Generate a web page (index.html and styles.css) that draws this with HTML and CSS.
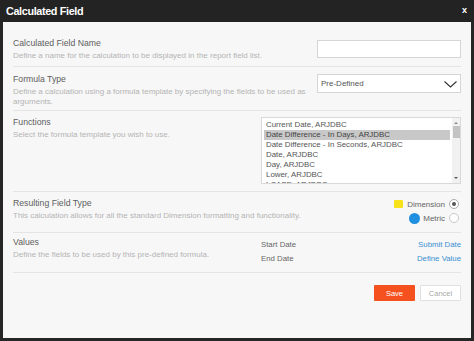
FILE: index.html
```html
<!DOCTYPE html>
<html>
<head>
<meta charset="utf-8">
<link rel="stylesheet" href="styles.css">
</head>
<body>
<div class="dialog">
  <div class="titlebar">
    <span class="title">Calculated Field</span>
    <span class="close">x</span>
  </div>
  <div class="body">
    <div class="row r1">
      <div class="info">
        <div class="label">Calculated Field Name</div>
        <div class="desc">Define a name for the calculation to be displayed in the report field list.</div>
      </div>
      <div class="input"></div>
    </div>
    <div class="row r2">
      <div class="info">
        <div class="label">Formula Type</div>
        <div class="desc">Define a calculation using a formula template by specifying the fields to be used as arguments.</div>
      </div>
      <div class="select">
        <span>Pre-Defined</span>
        <svg class="chev" width="13" height="7" viewBox="0 0 13 7"><path d="M0.5 0.5 L6.5 6 L12.5 0.5" fill="none" stroke="#333" stroke-width="1.1"/></svg>
      </div>
    </div>
    <div class="row r3">
      <div class="info">
        <div class="label">Functions</div>
        <div class="desc">Select the formula template you wish to use.</div>
      </div>
      <div class="listbox">
        <div class="items">
          <div class="item">Current Date, ARJDBC</div>
          <div class="item sel">Date Difference - In Days, ARJDBC</div>
          <div class="item">Date Difference - In Seconds, ARJDBC</div>
          <div class="item">Date, ARJDBC</div>
          <div class="item">Day, ARJDBC</div>
          <div class="item">Lower, ARJDBC</div>
          <div class="item">LCASE, ARJDBC</div>
        </div>
        <div class="scroll">
          <div class="arrow up"></div>
          <div class="thumb"></div>
          <div class="arrow down"></div>
        </div>
      </div>
    </div>
    <div class="row r4">
      <div class="info">
        <div class="label">Resulting Field Type</div>
        <div class="desc">This calculation allows for all the standard Dimension formatting and functionality.</div>
      </div>
      <div class="types">
        <div class="type"><span class="sq"></span><span>Dimension</span><span class="radio on"></span></div>
        <div class="type"><span class="dot"></span><span>Metric</span><span class="radio"></span></div>
      </div>
    </div>
    <div class="row r5">
      <div class="info">
        <div class="label">Values</div>
        <div class="desc">Define the fields to be used by this pre-defined formula.</div>
      </div>
      <div class="values">
        <div class="val"><span>Start Date</span><span class="link">Submit Date</span></div>
        <div class="val"><span>End Date</span><span class="link">Define Value</span></div>
      </div>
    </div>
    <div class="footer">
      <div class="btn save">Save</div>
      <div class="btn cancel">Cancel</div>
    </div>
  </div>
</div>
</body>
</html>
```
FILE: styles.css
```css
html, body {
  margin: 0;
  padding: 0;
  background: #262626;
  width: 474px;
  height: 341px;
  overflow: hidden;
  font-family: "Liberation Sans", Arial, sans-serif;
}
.dialog {
  display: flex;
  flex-direction: column;
  height: 341px;
}
.titlebar {
  height: 22px;
  background: #232323;
  display: flex;
  align-items: center;
  justify-content: space-between;
  padding: 0 7px 0 6px;
  color: #fff;
}
.title {
  font-weight: bold;
  font-size: 10.8px;
  letter-spacing: -0.35px;
  margin-top: -1px;
}
.close {
  font-weight: bold;
  font-size: 9px;
  margin-top: -2px;
}
.body {
  background: #f7f7f7;
  margin: 0 3px 0 3px;
  height: 316px;
  padding: 9px 10px 0 10px;
  box-sizing: border-box;
}
.row {
  display: flex;
  align-items: flex-start;
  border-bottom: 1px solid #e4e4e4;
  box-sizing: border-box;
}
.info {
  flex: 1;
  min-width: 0;
}
.label {
  font-size: 8.7px;
  line-height: 12px;
  color: #5e5e5e;
}
.desc {
  font-size: 8px;
  line-height: 9.5px;
  color: #b4b4b4;
  margin-top: 2px;
}
.r1 { height: 36px; padding-top: 6px; }
.r2 { height: 44px; padding-top: 6px; }
.r3 { height: 81px; padding-top: 5px; }
.r4 { height: 41px; padding-top: 5px; }
.r5 { height: 40px; padding-top: 3px; }
.r2 .info { padding-right: 6px; }
.input {
  width: 144px;
  height: 18px;
  box-sizing: border-box;
  border: 1px solid #d6d6d6;
  background: #fff;
  margin-top: 3px;
}
.select {
  width: 144px;
  height: 19px;
  box-sizing: border-box;
  border: 1px solid #d6d6d6;
  background: #fff;
  margin-top: 1px;
  display: flex;
  align-items: center;
  justify-content: space-between;
  padding: 0 3px 0 3px;
  font-size: 8px;
  color: #555;
}
.chev { display: block; margin-top: 1px; }
.listbox {
  width: 200px;
  height: 67px;
  box-sizing: border-box;
  border: 1px solid #d9d9d9;
  background: #fff;
  margin-top: 1px;
  display: flex;
  overflow: hidden;
}
.items {
  flex: 1;
  padding: 2px 2px 0 2px;
  overflow: hidden;
}
.item {
  font-size: 7.9px;
  line-height: 10px;
  height: 10px;
  color: #555;
  padding-left: 2px;
  white-space: nowrap;
}
.item.sel {
  background: #c8c8c8;
  color: #444;
}
.scroll {
  width: 8px;
  background: #f1f1f1;
  display: flex;
  flex-direction: column;
  align-items: center;
}
.arrow {
  width: 0;
  height: 0;
  border-left: 2px solid transparent;
  border-right: 2px solid transparent;
}
.arrow.up {
  border-bottom: 2px solid #888;
  margin-top: 4px;
}
.arrow.down {
  border-top: 2px solid #555;
  margin-top: auto;
  margin-bottom: 4px;
}
.thumb {
  width: 7px;
  height: 12px;
  background: #c3c3c3;
  margin-top: 2px;
}
.types {
  display: flex;
  flex-direction: column;
  align-items: flex-end;
  gap: 4px;
  margin-top: 2px;
}
.type {
  display: flex;
  align-items: center;
  font-size: 8px;
  color: #666;
  height: 10px;
}
.sq {
  width: 9px;
  height: 8px;
  background: #f7e21b;
  border-radius: 1px;
  margin-right: 4px;
}
.dot {
  width: 11px;
  height: 11px;
  border-radius: 50%;
  background: #1f8fe0;
  margin-right: 3px;
}
.radio {
  width: 10px;
  height: 10px;
  border-radius: 50%;
  border: 1px solid #c8c8c8;
  background: #fff;
  box-sizing: border-box;
  margin-left: 4px;
  margin-right: 2px;
  display: flex;
  align-items: center;
  justify-content: center;
}
.radio.on {
  border-color: #aaa;
}
.radio.on::after {
  content: "";
  width: 4px;
  height: 4px;
  border-radius: 50%;
  background: #555;
}
.values {
  width: 200px;
  margin-top: 4px;
  display: flex;
  flex-direction: column;
  gap: 4px;
}
.val {
  display: flex;
  justify-content: space-between;
  font-size: 7.8px;
  line-height: 10px;
  color: #666;
}
.link { color: #3a8fd2; }
.footer {
  display: flex;
  justify-content: flex-end;
  gap: 5px;
  margin-top: 12px;
}
.btn {
  width: 41px;
  height: 16px;
  box-sizing: border-box;
  font-size: 7.5px;
  display: flex;
  align-items: center;
  justify-content: center;
  border-radius: 1px;
}
.save {
  background: #f4511e;
  color: #fff;
}
.cancel {
  background: #fff;
  border: 1px solid #e0e0e0;
  color: #aaa;
}
```
